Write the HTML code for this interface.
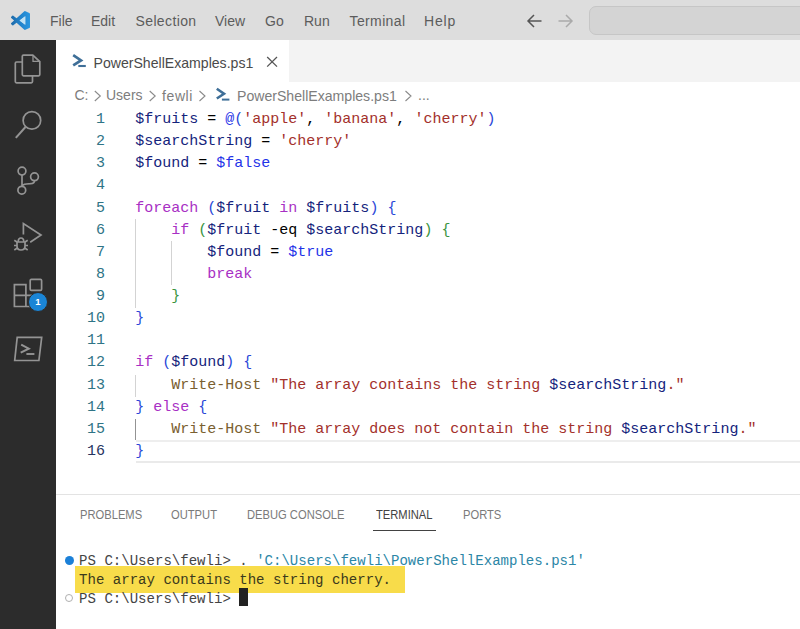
<!DOCTYPE html>
<html><head><meta charset="utf-8">
<style>
*{margin:0;padding:0;box-sizing:border-box}
html,body{width:800px;height:629px;overflow:hidden;background:#fff;position:relative}
body{font-family:"Liberation Sans",sans-serif}
.a{position:absolute;white-space:pre}
#title{position:absolute;left:0;top:0;width:800px;height:40px;background:#dddddd}
.menu{position:absolute;top:12.3px;font-size:14px;line-height:18px;color:#5c5c5c}
#act{position:absolute;left:0;top:40px;width:56px;height:589px;background:#2c2c2c}
#tabs{position:absolute;left:56px;top:40px;width:744px;height:42px;background:#f3f3f3}
#tab{position:absolute;left:56px;top:40px;width:233px;height:42px;background:#fff}
.code{position:absolute;left:135.25px;font-family:"Liberation Mono",monospace;font-size:15px;line-height:22px;white-space:pre;color:#000}
.ln{position:absolute;width:40px;left:65px;text-align:right;font-family:"Liberation Mono",monospace;font-size:15px;line-height:22px;color:#2f7486}
.v{color:#14237c}.k{color:#a82fc4}.s{color:#a3302b}.c{color:#1f33e8}.b1{color:#2a48d8}.b2{color:#3a9440}.f{color:#7a6030}
.guide{position:absolute;width:1px;background:#d3d3d3}
.ptab{position:absolute;top:507px;font-size:13px;line-height:16px;color:#7a7a7a;transform-origin:0 0}
.term{position:absolute;left:79.1px;font-family:"Liberation Mono",monospace;font-size:14.05px;line-height:18.75px;white-space:pre;color:#444}
</style></head><body>
<div id="title"></div>
<svg class="a" style="left:11px;top:11px" width="19" height="19" viewBox="0 0 100 100">
  <path d="M96.46 10.8L75.86.87a6.23 6.23 0 0 0-7.1 1.21L29.35 38.04 12.19 25a4.16 4.16 0 0 0-5.32.24L1.36 30.25a4.17 4.17 0 0 0 0 6.16L16.24 50 1.36 63.58a4.17 4.17 0 0 0 0 6.16l5.51 5.01a4.16 4.16 0 0 0 5.32.24l17.16-13.02L68.76 97.9a6.22 6.22 0 0 0 7.1 1.21l20.6-9.91A6.25 6.25 0 0 0 100 83.58V16.42a6.25 6.25 0 0 0-3.54-5.63zM75 72.7L45.11 50 75 27.3z" fill="url(#lg)"/>
  <path d="M75 72.7L45.11 50 75 27.3z" fill="#bfe2f5"/>
  <defs><linearGradient id="lg" x1="0" y1="0" x2="1" y2="0"><stop offset="0" stop-color="#1f6aa8"/><stop offset="0.5" stop-color="#2183cc"/><stop offset="1" stop-color="#2a97e0"/></linearGradient></defs>
</svg>
<div class="menu" style="left:50px">File</div>
<div class="menu" style="left:91px">Edit</div>
<div class="menu" style="left:135.5px;letter-spacing:0.38px">Selection</div>
<div class="menu" style="left:215px">View</div>
<div class="menu" style="left:265px">Go</div>
<div class="menu" style="left:304px">Run</div>
<div class="menu" style="left:349.5px;letter-spacing:0.38px">Terminal</div>
<div class="menu" style="left:424px;letter-spacing:0.8px">Help</div>
<svg class="a" style="left:520px;top:10px" width="60" height="22" viewBox="520 10 60 22">
  <path d="M534 15 L528 21 L534 27 M528 21 L541.5 21" stroke="#555" stroke-width="1.5" fill="none"/>
  <path d="M566 15 L572 21 L566 27 M572 21 L558.5 21" stroke="#aaa" stroke-width="1.5" fill="none"/>
</svg>
<div class="a" style="left:589px;top:6px;width:260px;height:28.5px;border:1.5px solid #c6c6c6;border-radius:7px;background:#d4d4d4"></div>

<div id="act"></div>
<svg class="a" style="left:0;top:40px" width="56" height="340" viewBox="0 40 56 340" fill="none" stroke="#949494" stroke-width="1.7">
  <!-- explorer -->
  <path d="M22.3 62 L16.5 62 Q15.3 62 15.3 63.2 L15.3 81.6 Q15.3 82.8 16.5 82.8 L31.3 82.8 Q32.5 82.8 32.5 81.6 L32.5 75.8"/>
  <path d="M23.5 55.1 L32.8 55.1 L39.8 61.5 L39.8 74.6 Q39.8 75.8 38.6 75.8 L23.5 75.8 Q22.3 75.8 22.3 74.6 L22.3 56.3 Q22.3 55.1 23.5 55.1 Z"/>
  <path d="M33 55.5 L33 61.3 L39.5 61.3" stroke-width="1.3"/>
  <!-- search -->
  <circle cx="31.9" cy="120.4" r="8.8"/>
  <path d="M25.5 127 L15.8 137.8" stroke-width="2"/>
  <!-- scm -->
  <circle cx="22" cy="171.1" r="3.9"/>
  <circle cx="34.5" cy="176.8" r="3.9"/>
  <circle cx="21.8" cy="190.2" r="3.9"/>
  <path d="M22 175 L22 186.3 M34.5 180.7 Q34.5 183.3 30.5 183.7 L26.5 184 Q22.3 184.3 22 187"/>
  <!-- run debug -->
  <path d="M23.4 234.5 L23.4 223.6 L41 235 L30.2 242.2"/>
  <path d="M17 242 L17 246 Q17 250 21 250 Q25 250 25 246 L25 242 Z M18.2 241.8 Q18.2 238 21 238 Q23.8 238 23.8 241.8"/>
  <path d="M14.3 240.3 L17 242 M27.7 240.3 L25 242 M14 245.5 L17 245.5 M28 245.5 L25 245.5 M14.3 250 L17.3 248 M27.7 250 L24.7 248"/>
  <!-- extensions -->
  <path d="M14.4 284.7 L25.9 284.7 L25.9 306.5 L14.4 306.5 Z M14.4 295.4 L31.6 295.4 L31.6 306.5 L25.9 306.5"/>
  <rect x="30.2" y="279.3" width="11.4" height="11.1" rx="1.2"/>
  <!-- terminal -->
  <path d="M17.2 337.3 L41.7 337.3 L38.9 360.5 L14.7 360.5 Z"/>
  <path d="M21.2 344.6 L28.8 348.6 L20.7 352.6" stroke-width="2"/><path d="M26.4 354 L34.4 354" stroke-width="1.9"/>
</svg>
<div class="a" style="left:27.5px;top:291.5px;width:20.5px;height:20.5px;border-radius:50%;background:#1a85d6;border:1.5px solid #2c2c2c"></div>
<div class="a" style="left:27.7px;top:296px;width:20.5px;text-align:center;font-size:9.5px;font-weight:bold;color:#fff;line-height:12px">1</div>

<div id="tabs"></div>
<div id="tab"></div>
<svg class="a" style="left:68px;top:50px" width="24" height="22" viewBox="68 50 24 22">
  <path d="M73.2 55.2 L81 60.4 L73.2 65.4" stroke="#3f6f98" stroke-width="2.7" fill="none" stroke-linejoin="miter"/>
  <path d="M78.3 66 L85.8 66" stroke="#3f6f98" stroke-width="2.1"/>
</svg>
<div class="a" style="left:93.5px;top:54.5px;font-size:14.1px;line-height:17px;color:#4a4a4a">PowerShellExamples.ps1</div>
<svg class="a" style="left:266px;top:56px" width="12" height="12" viewBox="0 0 12 12">
  <path d="M1.2 1 L11 10.6 M11 1 L1.2 10.6" stroke="#555" stroke-width="1.3"/>
</svg>

<!-- breadcrumbs -->
<div class="a" style="left:74.5px;top:87px;font-size:14px;line-height:17px;color:#7d7d7d">C:</div>
<div class="a" style="left:106px;top:87px;font-size:14px;line-height:17px;color:#7d7d7d">Users</div>
<div class="a" style="left:162px;top:87.5px;font-size:14px;line-height:17px;color:#7d7d7d;letter-spacing:0.6px">fewli</div>
<div class="a" style="left:237px;top:87.5px;font-size:14.1px;line-height:17px;color:#7d7d7d">PowerShellExamples.ps1</div>
<div class="a" style="left:418px;top:87px;font-size:14px;line-height:17px;color:#7d7d7d">...</div>
<svg class="a" style="left:90px;top:88px" width="330" height="16" viewBox="90 88 330 16" fill="none" stroke="#8a8a8a" stroke-width="1.1">
  <path d="M94.8 91 L100.3 96 L94.8 101 M149.7 91 L155.2 96 L149.7 101 M199.5 91 L205 96 L199.5 101 M405.5 91 L411 96 L405.5 101"/>
</svg>
<svg class="a" style="left:210px;top:84px" width="24" height="22" viewBox="210 84 24 22">
  <path d="M216.8 88.7 L224 93.8 L216.8 98.5" stroke="#3f6f98" stroke-width="2.6" fill="none"/>
  <path d="M221.9 99.6 L229.4 99.6" stroke="#3f6f98" stroke-width="2"/>
</svg>

<!-- current line border -->
<div class="a" style="left:136px;top:439.5px;width:664px;height:23px;border-top:2px solid #eeeeee;border-bottom:2px solid #eaeaea"></div>

<!-- indent guides -->
<div class="guide" style="left:135px;top:219px;height:88.5px"></div>
<div class="guide" style="left:171px;top:241px;height:44.3px"></div>
<div class="guide" style="left:135px;top:374.5px;height:22.1px"></div>
<div class="guide" style="left:135px;top:418.5px;height:21px;background:#939393"></div>

<!-- line numbers -->
<div class="ln" style="top:109.00px">1</div>
<div class="ln" style="top:131.13px">2</div>
<div class="ln" style="top:153.26px">3</div>
<div class="ln" style="top:175.39px">4</div>
<div class="ln" style="top:197.52px">5</div>
<div class="ln" style="top:219.65px">6</div>
<div class="ln" style="top:241.78px">7</div>
<div class="ln" style="top:263.91px">8</div>
<div class="ln" style="top:286.04px">9</div>
<div class="ln" style="top:308.17px">10</div>
<div class="ln" style="top:330.30px">11</div>
<div class="ln" style="top:352.43px">12</div>
<div class="ln" style="top:374.56px">13</div>
<div class="ln" style="top:396.69px">14</div>
<div class="ln" style="top:418.82px">15</div>
<div class="ln" style="top:440.95px;color:#27355f">16</div>

<!-- code -->
<div class="code" style="top:109.00px"><span class="v">$fruits</span> = <span class="c">@</span><span class="b1">(</span><span class="s">'apple'</span>, <span class="s">'banana'</span>, <span class="s">'cherry'</span><span class="b1">)</span></div>
<div class="code" style="top:131.13px"><span class="v">$searchString</span> = <span class="s">'cherry'</span></div>
<div class="code" style="top:153.26px"><span class="v">$found</span> = <span class="c">$false</span></div>
<div class="code" style="top:197.52px"><span class="k">foreach</span> <span class="b1">(</span><span class="v">$fruit</span> <span class="k">in</span> <span class="v">$fruits</span><span class="b1">)</span> <span class="b1">{</span></div>
<div class="code" style="top:219.65px">    <span class="k">if</span> <span class="b2">(</span><span class="v">$fruit</span> -eq <span class="v">$searchString</span><span class="b2">)</span> <span class="b2">{</span></div>
<div class="code" style="top:241.78px">        <span class="v">$found</span> = <span class="c">$true</span></div>
<div class="code" style="top:263.91px">        <span class="k">break</span></div>
<div class="code" style="top:286.04px">    <span class="b2">}</span></div>
<div class="code" style="top:308.17px"><span class="b1">}</span></div>
<div class="code" style="top:352.43px"><span class="k">if</span> <span class="b1">(</span><span class="v">$found</span><span class="b1">)</span> <span class="b1">{</span></div>
<div class="code" style="top:374.56px">    <span class="f">Write-Host</span> <span class="s">"The array contains the string </span><span class="v">$searchString</span><span class="s">."</span></div>
<div class="code" style="top:396.69px"><span class="b1">}</span> <span class="k">else</span> <span class="b1">{</span></div>
<div class="code" style="top:418.82px">    <span class="f">Write-Host</span> <span class="s">"The array does not contain the string </span><span class="v">$searchString</span><span class="s">."</span></div>
<div class="code" style="top:440.95px"><span class="b1">}</span></div>

<!-- panel -->
<div class="a" style="left:56px;top:494px;width:744px;height:1px;background:#e3e3e3"></div>
<div class="ptab" style="left:80px;transform:scaleX(0.86)">PROBLEMS</div>
<div class="ptab" style="left:170.5px;transform:scaleX(0.86)">OUTPUT</div>
<div class="ptab" style="left:247px;transform:scaleX(0.86)">DEBUG CONSOLE</div>
<div class="ptab" style="left:375.5px;color:#424242;transform:scaleX(0.86)">TERMINAL</div>
<div class="ptab" style="left:463px;transform:scaleX(0.86)">PORTS</div>
<div class="a" style="left:372.5px;top:529.5px;width:63.5px;height:1.5px;background:#424242"></div>

<!-- terminal -->
<div class="a" style="left:74.75px;top:566.2px;width:330.5px;height:26.5px;background:#f8dc4a"></div>
<div class="a" style="left:64.5px;top:555.5px;width:9px;height:9px;border-radius:50%;background:#1b80d8"></div>
<div class="a" style="left:64.7px;top:593.7px;width:8.5px;height:8.5px;border-radius:50%;border:1.2px solid #b0b0b0"></div>
<div class="term" style="top:552px">PS C:\Users\fewli&gt; . <span style="color:#2b86a6">'C:\Users\fewli\PowerShellExamples.ps1'</span></div>
<div class="term" style="top:570.5px;color:#3b3a1c">The array contains the string cherry.</div>
<div class="term" style="top:589.5px">PS C:\Users\fewli&gt; </div>
<div class="a" style="left:239.2px;top:588px;width:8.4px;height:18.4px;background:#222"></div>
</body></html>
